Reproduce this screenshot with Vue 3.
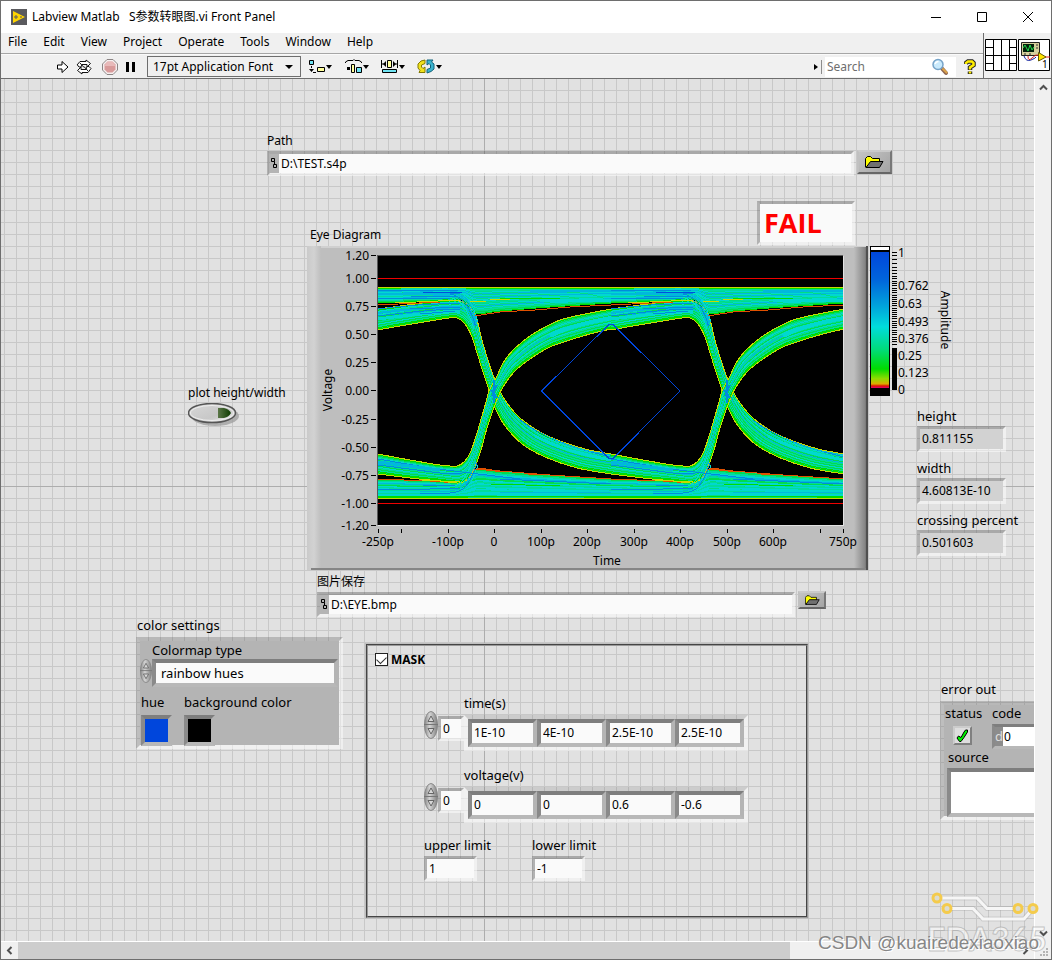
<script setup>
import { ref } from 'vue'

const menus = ['File', 'Edit', 'View', 'Project', 'Operate', 'Tools', 'Window', 'Help']
const path = ref('D:\\TEST.s4p')
const savePath = ref('D:\\EYE.bmp')
const maskOn = ref(true)

const readouts = [
  { id: 'height', label: 'height', value: '0.811155' },
  { id: 'width', label: 'width', value: '4.60813E-10' },
  { id: 'crossing', label: 'crossing percent', value: '0.501603' },
]
const arrays = [
  { id: 'time', label: 'time(s)', cells: ['1E-10', '4E-10', '2.5E-10', '2.5E-10'] },
  { id: 'voltage', label: 'voltage(v)', cells: ['0', '0', '0.6', '-0.6'] },
]
const limits = [
  { id: 'upper', label: 'upper limit', value: '1' },
  { id: 'lower', label: 'lower limit', value: '-1' },
]

/* axes */
const yTicks = ['1.20', '1.00', '0.75', '0.50', '0.25', '0.00', '-0.25', '-0.50', '-0.75', '-1.00', '-1.20']
  .map(t => ({ t, y: Math.round(144.4 - Number(t) * 112.5) }))
const xTicks = [-250, -200, -100, 0, 100, 200, 300, 400, 500, 600, 700, 750]
  .map(v => ({ x: Math.round(187 + v * 0.465), t: v === -200 || v === 700 ? '' : v === 0 ? '0' : v + 'p' }))

/* eye traces: pairs of points on the two edges of each band */
const band = rows => rows.map(r => [[r[0], r[1]], [r[2], r[3]]])
const falling = band([
  [378, 309, 378, 330], [400, 306, 400, 326], [430, 302, 430, 321], [449, 300, 449, 318],
  [463, 302, 457, 318], [471, 308, 465, 324], [477, 320, 472, 337], [482, 340, 477, 353],
  [487, 357, 482, 369], [493, 375, 488, 387], [500, 391, 491, 398], [507, 403, 495, 408],
  [520, 418, 505, 426], [540, 432, 522, 444], [560, 441, 545, 457], [585, 449, 577, 468], [611, 454, 611, 474],
])
const rising = band([
  [378, 454, 378, 474], [410, 460, 410, 478], [440, 465, 440, 481], [457, 466, 459, 483],
  [465, 461, 469, 478], [471, 451, 475, 467], [477, 433, 481, 450], [482, 416, 487, 428],
  [486, 402, 492, 413], [489, 391, 498, 397], [496, 378, 503, 387], [507, 357, 515, 371],
  [527, 338, 533, 357], [547, 326, 550, 347], [563, 319, 567, 341], [590, 313, 590, 334], [611, 309, 611, 329],
])
const topRail = band([[378, 287, 378, 303], [430, 287, 430, 301], [462, 287, 462, 300], [476, 287, 476, 313], [500, 287, 500, 311], [550, 287, 550, 307], [611, 287, 611, 303]])
const lowRail = band([[378, 479, 378, 498], [430, 481, 430, 498], [462, 482, 462, 498], [476, 469, 476, 498], [500, 471, 500, 498], [550, 475, 550, 498], [611, 479, 611, 498]])
const topBend = band([[420, 290, 420, 300], [448, 289, 448, 299], [460, 292, 456, 302], [468, 299, 463, 308], [474, 310, 469, 319], [478, 322, 473, 330]])
const lowBend = band([[420, 488, 420, 495], [450, 487, 450, 495], [461, 482, 464, 491], [468, 471, 472, 480], [474, 457, 478, 465]])

function smooth(p) {
  let d = `M${p[0][0]} ${p[0][1]}`
  for (let i = 0; i < p.length - 1; i++) {
    const a = p[i - 1] || p[i], b = p[i], c = p[i + 1], e = p[i + 2] || c
    const f = n => n.toFixed(1)
    d += `C${f(b[0] + (c[0] - a[0]) / 6)} ${f(b[1] + (c[1] - a[1]) / 6)} ${f(c[0] - (e[0] - b[0]) / 6)} ${f(c[1] - (e[1] - b[1]) / 6)} ${f(c[0])} ${f(c[1])}`
  }
  return d
}
const T = '#00dc84'
function body(pairs) {
  const upper = smooth(pairs.map(p => p[0]))
  const lower = smooth(pairs.map(p => p[1]).reverse())
  return { d: upper + 'L' + lower.slice(1) + 'Z', c: 'none', w: 0, fill: T }
}
function strands(pairs, colors, w = 1) {
  const n = colors.length
  const order = [...colors.keys()].slice(1, -1).concat([0, n - 1])
  return order.map(i => {
    const t = i / (n - 1)
    const edge = i === 0 || i === n - 1
    return { d: smooth(pairs.map(([u, l]) => [u[0] + (l[0] - u[0]) * t, u[1] + (l[1] - u[1]) * t])), c: colors[i], w: edge ? 1 : w, fill: 'none' }
  })
}
const R = '#e05000', Y = '#c8d800', G = '#00dc00', g = '#00dc50', t = '#00dc9c', c = '#00d8d0', b = '#00b8dc', B = '#008cdc', D = '#0050dc'
const traces = [
  body(topRail), ...strands(topRail, [Y, G, t, c, b, c, b, c, c, t, c, b, c, t, g, G]),
  body(lowRail), ...strands(lowRail, [R, g, t, c, b, t, g, c, t, c, t, c, c, t, c, c, G, Y], 1.5),
  body(falling), ...strands(falling, [Y, G, c, t, g, c, t, g, b, t, g, t, g, c, g, t, G, G, Y]),
  body(rising), ...strands(rising, [Y, G, g, t, c, t, g, c, t, b, t, g, c, t, g, t, G, G, Y]),
  ...strands(topBend, [c, b, b, B, b, c, t], 1),
  ...strands(lowBend, [c, t, b, B, c], 1),
]
const streaks = [
  { d: 'M378 309C410 305 435 303 460 304', c: B }, { d: 'M378 313C410 309 435 307 462 307', c: b, w: 2 }, { d: 'M378 319C410 315 435 312 460 311', c: c, w: 3 }, { d: 'M378 316C410 312 435 309 460 309', c: B },
  { d: 'M378 290H458', c: B }, { d: 'M411 293H460', c: B }, { d: 'M378 298H450', c: B }, { d: 'M423 292H462', c: D }, { d: 'M378 294H450', c: b, w: 2 },
  { d: 'M411 296H456', c: B }, { d: 'M500 298H560', c: G }, { d: 'M530 291H611', c: b, w: 2 }, { d: 'M480 289H530', c: t }, { d: 'M540 300H611', c: c, w: 3 },
  { d: 'M378 489H430L460 488', c: B }, { d: 'M423 485H455', c: B }, { d: 'M490 484L560 486', c: G }, { d: 'M500 479L611 484', c: B },
  { d: 'M378 459L430 468L470 473L520 479', c: B }, { d: 'M378 465L440 473H462', c: B }, { d: 'M378 462L440 470', c: b, w: 3 }, { d: 'M500 492H611', c: b },
  { d: 'M410 309L460 307', c: B }, { d: 'M420 314L455 311', c: B }, { d: 'M378 305L440 302', c: R }, { d: 'M395 303L460 300', c: Y },
  { d: 'M470 301H486M490 299H510', c: Y }, { d: 'M475 316L500 312L535 310L570 307L611 305', c: R },
  { d: 'M378 479H402M414 480H422', c: R }, { d: 'M422 480L460 482', c: Y }, { d: 'M476 469L505 472M528 474H547', c: R },
  { d: 'M520 420C540 436 575 449 611 457', c: B }, { d: 'M535 436C560 449 580 454 611 460', c: c, w: 3 }, { d: 'M545 435C565 446 585 451 611 455', c: b },
  { d: 'M550 336C570 326 590 322 611 318', c: c, w: 4 },
]

/* colour ramp scale */
const rampLabels = [['1', 253], ['0.762', 286], ['0.63', 304], ['0.493', 322], ['0.376', 339], ['0.25', 356], ['0.123', 373], ['0', 390]]
const rampTicks = [253, 256, 260, 264, 268, 271, 274, 277, 279, 282, 284, 286, 289, 291, 293, 296, 298, 300, 302, 304, 306, 309, 311, 313, 315, 317, 319, 322, 324, 326, 328, 331, 333, 335, 338, 340, 342, 345]
</script>

<template>
  <div class="window">
    <header class="titlebar">
      <svg class="appicon" width="16" height="16" viewBox="0 0 16 16"><path fill="#5a5a5e" d="M0 0H16V16H0z" /><path fill="#ffd500" d="M2 2L14 8L2 14z" /><path stroke="#5a5a5e" d="M3 8h4M5 6v4M9 8h2" /></svg>
      <h1>Labview Matlab&nbsp;&nbsp; S参数转眼图.vi Front Panel</h1>
      <div class="winbtns">
        <button aria-label="Minimize"><svg width="12" height="12"><path d="M1 6.500H11" /></svg></button>
        <button aria-label="Maximize"><svg width="12" height="12"><path d="M1.500 1.500H10.500V10.500H1.500z" /></svg></button>
        <button aria-label="Close"><svg width="12" height="12"><path d="M1 1L11 11M11 1L1 11" /></svg></button>
      </div>
    </header>

    <div class="bars">
      <div class="barcol">
        <nav class="menubar"><button v-for="m in menus" :key="m">{{ m }}</button></nav>
        <div class="toolbar">
          <button class="run" aria-label="Run"><svg width="14" height="14" viewBox="0 0 14 14"><path fill="#fff" stroke="#000" d="M1.500 5H6V1.500L12 7L6 12.500V9H1.500z" /></svg></button>
          <button class="cont" aria-label="Run continuously"><svg width="16" height="16" viewBox="0 0 16 16" fill="#fff" stroke="#111"><path d="M1 6L4 2.500H10V1L14.500 4.500L11 8V5.500H6L5 8H3L1.500 6z" /><path d="M15 9.500L12 13.500H6V15L1.500 11.500L5 8V10.500H10L11 7.500H13L15 9.500z" /><path d="M4 4L8 8.500M8 7.500L12 12" /></svg></button>
          <button class="stop" aria-label="Abort"><svg width="16" height="16" viewBox="0 0 16 16"><path fill="#f5eeee" stroke="#8c8585" d="M5 .5H11L15.500 5V11L11 15.500H5L.5 11V5z" /><path fill="#d99a9a" d="M5.500 2.500H10.500L13.500 5.500V10.500L10.500 13.500H5.500L2.500 10.500V5.500z" /><path fill="#e8b9b9" d="M5.500 3H10.500L13 5.500V7H3V5.500z" /></svg></button>
          <button class="pause" aria-label="Pause"><svg width="9" height="12"><path d="M0 1H3V11H0zM6 1H9V11H6z" /></svg></button>
          <span class="fontpick"><select aria-label="Font"><option>17pt Application Font</option></select><i class="caret"></i></span>
          <button class="tool" aria-label="Align objects"><svg width="16" height="15" viewBox="0 0 16 15"><path fill="#6fe3f2" stroke="#000" d="M.5 1.500h4v4h-4z" /><path fill="#ffff9c" stroke="#000" d="M8.500 8.500h7v4h-7z" /><path d="M2 7h1v2H2zM2 10h1v2H2zM0 10h5l-2.500 3zM4 13h3v1H4z" /></svg><i class="caret"></i></button>
          <button class="tool" aria-label="Distribute objects"><svg width="17" height="15" viewBox="0 0 17 15"><path fill="none" stroke="#000" d="M.5 4V3L3 1.500H8L9 .5L10 1.500H14L16.500 3V4" /><path fill="#ffff9c" stroke="#000" d="M6.500 5.500h3v8h-3z" /><path fill="#6fe3f2" stroke="#000" d="M11.500 8.500h5v5h-5z" /><path d="M2 8h3v3H2z" /></svg><i class="caret"></i></button>
          <button class="tool" aria-label="Resize objects"><svg width="17" height="15" viewBox="0 0 17 15"><path stroke="#000" d="M.5 1V9M16.500 1V9M1 5H5M12 5H16" /><path d="M2 5L5 2V8zM15 5L12 2V8z" /><path fill="#ffff9c" stroke="#000" d="M6.500 1.500h4v7h-4z" /><path fill="#6fe3f2" stroke="#000" d="M1.500 10.500h14v3h-14z" /></svg><i class="caret"></i></button>
          <button class="tool" aria-label="Reorder"><svg width="18" height="15" viewBox="0 0 18 15"><path fill="#f1e21b" stroke="#847a00" d="M8 1L4 2L1 5V9L3 11.500L2 13.500H8V8L6 9.500L4.500 8V6L8 4.500z" /><path fill="#3bb4cf" stroke="#11627a" d="M10 1V6L12 4.500L13.500 6V9L10 10.500V14L14 12.500L17 10V5L14.500 3L16 1z" /></svg><i class="caret"></i></button>
          <div class="search">
            <i class="tri"></i><i class="bar"></i>
            <label class="searchbox"><input type="search" placeholder="Search" aria-label="Search"><svg width="18" height="18" viewBox="0 0 18 18"><path stroke="#8f6752" stroke-width="4" stroke-linecap="round" d="M11 10.500L15 15" /><path stroke="#dca34a" stroke-width="2" stroke-linecap="round" d="M12 11L15.500 14.500" /><circle cx="7" cy="6.500" r="5" fill="#c9eafc" stroke="#76a3c8" stroke-width="1.500" /><path stroke="#fff" stroke-width="1.500" fill="none" d="M4 6Q5 3.500 7.500 3.500" /></svg></label>
            <button class="help" aria-label="Context help"><svg width="12" height="16" viewBox="0 0 12 16"><path fill="none" stroke="#222" stroke-width="4.500" d="M2 5V4L4 2.500H8L9.500 4V6L6 8.500V11M6 12.500V15" /><path fill="none" stroke="#ffee00" stroke-width="2.500" d="M2 5V4L4 2.500H8L9.500 4V6L6 8.500V10.500M6 12.500V14.500" /></svg></button>
          </div>
        </div>
      </div>
      <div class="viicon">
        <svg width="32" height="32" viewBox="0 0 32 32"><path fill="#fff" stroke="#000" d="M.5.500h31v31h-31z" /><path stroke="#000" d="M8.500 0V32M16.500 0V32M24.500 0V32M0 16.500H32M0 8.500H8M24 8.500H32M0 24.500H8M24 24.500H32" /></svg>
        <svg width="32" height="32" viewBox="0 0 32 32"><path fill="#fff" stroke="#000" d="M.5.500h31v31h-31z" /><path fill="#d5cf9c" stroke="#222" d="M3.500 3.500h18v13h-18z" /><path fill="#04210b" d="M5 5h11v8H5z" /><path fill="none" stroke="#1fd84b" d="M5 9L7 6L10 12L12 6L14 11L16 8" /><path stroke="#333" d="M18 6h2M18 9h2M6 15h2M11 15h2" /><path fill="none" stroke="#1424a0" d="M6 17Q8 23 13 21T18 18" /><path fill="none" stroke="#d22" d="M10 17Q10 23 14 19T20 16M27 18H32" /><path fill="#ffe500" stroke="#665b00" d="M20.500 13.500L28 18L20.500 22z" /><text class="vinum" x="24" y="29">1</text></svg>
      </div>
    </div>

    <main class="work">
      <div class="panel">
        <div class="obj o-path">
          <label for="path">Path</label>
          <div class="row">
            <span class="inset pathctl"><svg width="9" height="19"><path fill="none" stroke="#000" d="M1.500 4.500h3v3h-3zM3.500 10.500h3v3h-3zM4.500 7.500V10" /></svg><input id="path" v-model="path"></span>
            <button class="browse" aria-label="Browse path"><svg width="19" height="13" viewBox="0 0 19 13"><path fill="#ffff00" stroke="#000" d="M.5 11V2.500L2.500.5H5.500L7.500 2.500H14.500V6H6L2 11.500z" /><path fill="#707070" stroke="#000" d="M1 11.500L5.500 5.500H18L14.500 11.500z" /></svg></button>
          </div>
        </div>

        <output class="obj o-fail inset">FAIL</output>

        <section class="obj o-eye">
          <h2>Eye Diagram</h2>
          <svg class="graph" width="561" height="324" viewBox="0 0 561 324">
            <defs>
              <linearGradient id="lg" x1="0" x2="1"><stop offset="0" stop-color="#cacaca" /><stop offset=".5" stop-color="#d2d2d2" /><stop offset="1" stop-color="#bebebe" /></linearGradient>
              <linearGradient id="rg" x1="0" x2="1"><stop offset="0" stop-color="#bebebe" /><stop offset=".75" stop-color="#888" /><stop offset="1" stop-color="#606060" /></linearGradient>
              <clipPath id="clip"><path d="M71 10H536V279H71z" /></clipPath>
            </defs>
            <path fill="#bebebe" d="M0 0H561V324H0z" />
            <path fill="#d0d0d0" d="M0 0H561V2H0z" />
            <path fill="url(#lg)" d="M0 0H14V324H0z" />
            <path fill="url(#rg)" d="M547 1H561V324H547z" />
            <path fill="#858585" d="M4 322H561V324H4z" />
            <path fill="#505050" d="M559 0H561V324H559z" />
            <path fill="#5a5a5a" d="M70 9H536V279H70z" />
            <path fill="#e2e2e2" d="M71 279H536V10H537V280H71z" />
            <path fill="#000" d="M71 10H536V279H71z" />
            <g clip-path="url(#clip)" fill="none" shape-rendering="crispEdges">
              <path stroke="#f00000" d="M71 32.500H537M71 257.500H537" />
              <g v-for="k in 2" :key="k" :transform="`translate(${-307 + (k - 1) * 233} -246)`">
                <path v-for="(s, i) in traces" :key="i" :d="s.d" :stroke="s.c" :stroke-width="s.w" :fill="s.fill" />
                <path v-for="(s, i) in streaks" :key="'s' + i" :d="s.d" :stroke="s.c" :stroke-width="s.w || 1" />
                <path stroke="#008cdc" stroke-width="2" d="M494 380V403M491 390L497 398M497 385L492 396" />
              </g>
              <path stroke="#0046dc" d="M234.500 145L302 78.500H306L373 145L306 212.500H302z" />
            </g>
            <g v-for="k in yTicks" :key="k.t"><path stroke="#000" :d="`M64 ${k.y + .5}H69`" /><text class="yl" x="62" :y="k.y + 5">{{ k.t }}</text></g>
            <g v-for="k in xTicks" :key="k.x"><path stroke="#000" :d="`M${k.x + .5} 283V287`" /><text class="xl" :x="k.x" y="300">{{ k.t }}</text></g>
            <text class="xl" x="300" y="319">Time</text>
            <text class="xl" transform="translate(25 144) rotate(-90)">Voltage</text>
          </svg>
        </section>

        <svg class="obj o-ramp" width="90" height="158" viewBox="0 -4 90 158">
          <defs><linearGradient id="ramp" x2="0" y2="1"><stop offset="0" stop-color="#0046dc" /><stop offset=".2" stop-color="#0064dc" /><stop offset=".4" stop-color="#00a4dc" /><stop offset=".55" stop-color="#00dcdc" /><stop offset=".72" stop-color="#00dc78" /><stop offset=".86" stop-color="#00dc00" /><stop offset=".93" stop-color="#8cdc00" /><stop offset=".97" stop-color="#dcaa00" /><stop offset=".985" stop-color="#dc1400" /><stop offset="1" stop-color="#dc0078" /></linearGradient></defs>
          <path d="M0 0H20V150H0z" /><path fill="#fff" d="M1 1H19V4H1z" /><path fill="url(#ramp)" d="M1 6H19V142H1z" />
          <path v-for="y in rampTicks" :key="y" stroke="#000" :d="`M22 ${y - 246.5}H27`" />
          <path d="M22 102H27V144H22z" />
          <text v-for="l in rampLabels" :key="l[0]" x="28" :y="l[1] - 242">{{ l[0] }}</text>
          <text class="xl" transform="translate(71 74) rotate(90)">Amplitude</text>
        </svg>

        <div class="obj o-plot">
          <label for="plot">plot height/width</label>
          <button id="plot" class="pill"><svg width="52" height="25" viewBox="0 0 52 25"><defs><linearGradient id="pl" x1="0" y1="0" x2="1" y2="1"><stop offset="0" stop-color="#d8d8d8" /><stop offset=".6" stop-color="#c8c8c8" /><stop offset="1" stop-color="#eee" /></linearGradient><linearGradient id="gr" x1="0" x2="1"><stop offset="0" stop-color="#5b7748" /><stop offset="1" stop-color="#0d3b00" /></linearGradient></defs><ellipse cx="27" cy="13" rx="24" ry="10" fill="#999" opacity=".7" /><ellipse cx="24" cy="10" rx="23.500" ry="9.500" fill="url(#pl)" stroke="#555" stroke-width="1.500" /><ellipse cx="24" cy="10" rx="21.500" ry="7.500" fill="none" stroke="#eee" /><path fill="url(#gr)" d="M30 5H36Q41 6 43 10Q41 14 36 15H30z" /></svg></button>
        </div>

        <div class="obj o-read">
          <div v-for="r in readouts" :key="r.id"><label :for="r.id">{{ r.label }}</label><output :id="r.id" class="inset">{{ r.value }}</output></div>
        </div>

        <div class="obj o-save">
          <label for="save">图片保存</label>
          <div class="row">
            <span class="inset pathctl"><svg width="9" height="19"><path fill="none" stroke="#000" d="M1.500 4.500h3v3h-3zM3.500 10.500h3v3h-3zM4.500 7.500V10" /></svg><input id="save" v-model="savePath"></span>
            <button class="browse small" aria-label="Browse save path"><svg width="15" height="11" viewBox="0 0 19 13"><path fill="#ffff00" stroke="#000" d="M.5 11V2.500L2.500.5H5.500L7.500 2.500H14.500V6H6L2 11.500z" /><path fill="#707070" stroke="#000" d="M1 11.500L5.500 5.500H18L14.500 11.500z" /></svg></button>
          </div>
        </div>

        <section class="obj o-color">
          <h2>color settings</h2>
          <div class="cluster">
            <label for="cmap" class="cmlabel">Colormap type</label>
            <div class="row cmrow">
              <button class="spin" aria-label="Next colormap"><svg width="12" height="24" viewBox="0 0 14 28"><ellipse cx="7" cy="14" rx="6.500" ry="13.500" fill="url(#sptime)" stroke="#888" /><path fill="#d8d8d8" stroke="#666" d="M4 10.500L7 5L10 10.500zM4 17.500L7 23L10 17.500z" /><path stroke="#777" d="M0 13.500H14" /></svg></button>
              <span class="inset dark combo"><select id="cmap"><option>rainbow hues</option></select></span>
            </div>
            <div class="row swrow">
              <div><label for="hue">hue</label><button id="hue" class="inset dark swatch blue"></button></div>
              <div><label for="bg">background color</label><button id="bg" class="inset dark swatch black"></button></div>
            </div>
          </div>
        </section>

        <section class="obj o-mask">
          <label class="check"><input v-model="maskOn" type="checkbox"><span>MASK</span></label>
          <div v-for="a in arrays" :key="a.id" class="array">
            <button class="spin" :aria-label="a.label + ' index step'"><svg width="14" height="28" viewBox="0 0 14 28"><defs><linearGradient :id="'sp' + a.id" x2="1"><stop offset="0" stop-color="#888" /><stop offset=".4" stop-color="#d4d4d4" /><stop offset="1" stop-color="#808080" /></linearGradient></defs><ellipse cx="7" cy="14" rx="6.500" ry="13.500" :fill="`url(#sp${a.id})`" stroke="#888" /><path fill="#d8d8d8" stroke="#666" d="M4 10.500L7 5L10 10.500zM4 17.500L7 23L10 17.500z" /><path stroke="#777" d="M0 13.500H14" /></svg></button>
            <span class="inset idx"><input value="0" :aria-label="a.label + ' index'"></span>
            <div>
              <label :for="a.id">{{ a.label }}</label>
              <div class="frame"><span v-for="(v, i) in a.cells" :key="i" class="inset dark"><input :id="i ? a.id + i : a.id" :value="v" :aria-label="a.label + ' ' + i"></span></div>
            </div>
          </div>
          <div class="row limits">
            <div v-for="l in limits" :key="l.id"><label :for="l.id">{{ l.label }}</label><span class="inset"><input :id="l.id" :value="l.value"></span></div>
          </div>
        </section>

        <section class="obj o-err">
          <h2>error out</h2>
          <div class="cluster">
            <div class="row">
              <div class="status"><label for="st">status</label><button id="st"><svg width="13" height="14" viewBox="0 0 13 14"><path fill="#00f000" stroke="#000" d="M1 9L2.500 7L5 8.500L8 3L9.500 1H11.500V3L8 8.500L5 12.500H3.500z" /></svg></button></div>
              <div class="code"><label for="code">code</label><span class="inset dark"><b>d</b><input id="code" value="0"></span></div>
            </div>
            <label for="src" class="srclabel">source</label>
            <span class="inset dark src"><textarea id="src"></textarea></span>
          </div>
        </section>
      </div>

      <div class="vscroll"><button aria-label="Scroll up"><svg width="9" height="7"><path d="M1 5.500L4.500 2L8 5.500" /></svg></button><button aria-label="Scroll down"><svg width="9" height="7"><path d="M1 1.500L4.500 5L8 1.500" /></svg></button></div>
      <div class="hscroll"><button aria-label="Scroll left"><svg width="7" height="9"><path d="M5.500 1L2 4.500L5.500 8" /></svg></button><i class="thumb"></i><i class="track"></i><button aria-label="Scroll right"><svg width="7" height="9"><path d="M1.500 1L5 4.500L1.500 8" /></svg></button></div>
      <div class="grip"><svg width="9" height="9"><path fill="#b4b4b4" d="M6 0h2v2H6zM3 3h2v2H3zM6 3h2v2H6zM0 6h2v2H0zM3 6h2v2H3zM6 6h2v2H6z" /></svg></div>
    </main>

    <div class="mark">
      <svg width="124" height="68" viewBox="0 0 124 68"><g fill="none" stroke="#999" stroke-opacity=".3" stroke-width="5"><path d="M12 7H50L60 17.500H88M22 17.500H46L56 28H97L106 17.500" /></g><g fill="none" stroke="#f6f6f6" stroke-width="3"><path d="M12 7H50L60 17.500H88M22 17.500H46L56 28H97L106 17.500" /></g><g fill="#dcdcd0" stroke="#f4cb4c" stroke-width="3"><circle cx="10" cy="7" r="4" /><circle cx="20" cy="17.500" r="4" /><circle cx="91" cy="17.500" r="4" /><circle cx="106" cy="17.500" r="4" /></g><text x="0" y="60">EDA365</text></svg>
    </div>
    <p class="credit">CSDN @kuairedexiaoxiao</p>
  </div>
</template>

<style>
body { margin: 0; }
</style>

<style scoped>
* { box-sizing: border-box; }
.window { position: relative; height: 100vh; display: flex; flex-direction: column; border: 1px solid #6e6e6e; background: #f0f0f0; color: #000; font: 13px/18px "Noto Sans", "Noto Sans CJK SC", sans-serif; overflow: hidden; }
button, input, select, textarea { font: inherit; color: inherit; border: 0; margin: 0; padding: 0; background: none; border-radius: 0; outline: 0; }
button { display: flex; align-items: center; justify-content: center; }
svg { display: block; flex: none; }
h1, h2 { margin: 0; font: inherit; white-space: nowrap; }
label { white-space: nowrap; }
text { font: 12px "Noto Sans", sans-serif; }
.vinum { font-size: 10px; }
select { appearance: none; }
.row { display: flex; }

.titlebar { display: flex; align-items: center; height: 32px; background: #fff; padding-left: 10px; }
.titlebar h1 { margin-left: 5px; font-size: 12px; flex: 1; }
.winbtns { display: flex; }
.winbtns button { width: 46px; height: 30px; }
.winbtns svg { fill: none; stroke: #000; }

.bars { display: flex; height: 46px; border-bottom: 1px solid #6e6e6e; }
.barcol { flex: 1; display: flex; flex-direction: column; min-width: 0; }
.menubar { display: flex; height: 21px; gap: 16px; padding: 0 0 2px 7px; border-bottom: 1px solid #a6a6a6; font-size: 12px; }
.toolbar { flex: 1; display: flex; align-items: center; padding-left: 55px; border-top: 1px solid #fafafa; }
.cont { margin-left: 6px; }
.stop { margin-left: 10px; }
.pause { margin-left: 8px; }
.fontpick { position: relative; margin-left: 12px; width: 154px; height: 21px; border: 1px solid #6e6e6e; }
.fontpick select { width: 100%; height: 19px; padding-left: 5px; font-size: 12px; }
.caret { width: 0; height: 0; border: 4px solid transparent; border-top-color: #000; border-bottom: 0; }
.fontpick .caret { position: absolute; right: 7px; top: 8px; }
.tool { margin-left: 8px; height: 20px; width: 28px; justify-content: flex-start; }
.tool .caret { border-left-width: 3px; border-right-width: 3px; margin-left: 1px; }
.search { margin-left: auto; display: flex; align-items: center; padding-right: 7px; }
.tri { border: 3px solid transparent; border-left: 4px solid #000; border-right: 0; }
.bar { width: 1px; height: 14px; background: #8c8c8c; margin: 0 3px; }
.searchbox { display: flex; align-items: center; width: 131px; height: 20px; background: #fff; padding: 0 7px 0 2px; }
.searchbox input { flex: 1; min-width: 0; font-size: 12px; }
.searchbox input::placeholder { color: #6e6e6e; opacity: 1; }
.help { margin-left: 8px; }
.viicon { width: 68px; border-left: 1px solid #6e6e6e; display: flex; align-items: center; gap: 1px; padding: 0 1px 2px; }

.work { flex: 1; min-height: 0; display: grid; grid-template: minmax(0, 1fr) 18px / minmax(0, 1fr) 17px; }
.panel { position: relative; overflow: hidden; background-color: #e1e1e1;
  background-image: linear-gradient(#adadad, #adadad), linear-gradient(#adadad, #adadad), linear-gradient(90deg, #c8c8c8 1px, transparent 1px), linear-gradient(#c8c8c8 1px, transparent 1px);
  background-size: 1px 100%, 100% 1px, 12px 12px, 12px 12px; background-position: 483px 0, 0 407px, 3px 11px, 3px 11px; background-repeat: no-repeat, no-repeat, repeat, repeat; }
.obj { position: absolute; }
.obj label, .obj h2 { display: block; line-height: 16px; padding-bottom: 2px; }
.inset { display: flex; border: 3px solid; border-color: rgba(80,80,80,.38) rgba(255,255,255,.5) rgba(255,255,255,.5) rgba(80,80,80,.32); background: #fafafa padding-box; }
.inset.dark { border-width: 4px; border-color: #7e7e7e #b4b4b4 #b8b8b8 #8a8a8a; }
.inset input { width: 100%; min-width: 0; height: 19px; font-size: 12px; padding-left: 2px; }

.o-path { left: 266px; top: 53px; }
.o-path .pathctl { width: 587px; margin-top: 1px; }
.o-save { left: 316px; top: 494px; }
.o-save .pathctl { width: 478px; margin-top: 1px; }
.o-path label, .o-save label, .o-plot label { font-size: 12px; line-height: 18px; padding: 0; }
.pathctl svg { background: #b4b4b4; }
.browse { width: 35px; height: 24px; margin-left: 3px; background: linear-gradient(135deg, #c4c4c4, #a4a4a4); border: 2px solid; border-color: #cacaca #777 #666 #c0c0c0; }
.browse.small { width: 28px; height: 18px; }
.o-fail { left: 756px; top: 122px; width: 98px; height: 44px; align-items: center; padding-left: 4px; color: #f00; font: bold 27px/38px "Open Sans", sans-serif; }
.o-eye { left: 306px; top: 147px; }
.o-eye h2 { padding: 1px 0 3px 3px; font-size: 12px; }
.yl { text-anchor: end; }
.xl { text-anchor: middle; }
.o-ramp { left: 869px; top: 163px; }
.o-plot { left: 187px; top: 305px; }
.pill { margin-top: 1px; }
.o-read { left: 916px; top: 329px; display: flex; flex-direction: column; gap: 8px; }
.o-read output { width: 89px; height: 26px; line-height: 20px; padding-left: 2px; background-color: #d2d2d2; font-size: 12px; }
.o-color { left: 135px; top: 538px; }
.o-color h2, .o-err h2 { padding-left: 1px; }
.cluster { background: #b4b4b4 padding-box; border: 4px solid; border-color: rgba(90,90,90,.3) rgba(255,255,255,.45) rgba(255,255,255,.5) rgba(90,90,90,.25); }
.o-color .cluster { width: 207px; height: 112px; margin-top: 2px; }
.cluster .cmlabel { padding: 1px 0 1px 12px; }
.cmrow { align-items: flex-start; }
.combo { flex: 1; height: 28px; margin-right: 1px; }
.combo select { width: 100%; padding-left: 5px; }
.swrow { gap: 22px; padding: 7px 1px 0; }
.swrow > div { width: 21px; }
.swatch { width: 31px; height: 31px; margin-top: 3px; }
.blue { background-color: #0046dc; }
.black { background-color: #000; }
.o-mask { left: 365px; top: 565px; width: 442px; height: 274px; border: 2px groove #999; outline: 1px solid #c0c0c0; }
.o-mask .check { display: flex; align-items: center; gap: 3px; height: 20px; margin: 4px 0 0 7px; padding: 0; font-weight: bold; font-size: 12px; }
.check input { appearance: none; width: 13px; height: 13px; margin-bottom: 1px; border: 1px solid #222; background: #fff; display: grid; place-items: center; }
.check input:checked::after { content: ""; width: 8px; height: 5px; border: solid #333; border-width: 0 0 1px 1px; transform: translateY(-1px) rotate(-45deg); }
.array { display: flex; align-items: flex-start; margin: 25px 0 0 56px; height: 47px; }
.array .spin { margin-top: 16px; }
.idx { width: 26px; height: 25px; margin-top: 21px; }
.frame { display: flex; height: 36px; background: #aaa padding-box; border: 4px solid; border-color: rgba(90,90,90,.15) rgba(255,255,255,.55) rgba(255,255,255,.55); margin-top: 2px; }
.frame .inset { width: 69px; height: 28px; }
.limits { margin: 23px 0 0 56px; }
.limits > div { width: 108px; }
.limits .inset { width: 53px; margin-top: 1px; }
.o-err { left: 939px; top: 602px; width: 260px; }
.o-err .cluster { height: 119px; margin-top: 2px; }
.status { width: 48px; padding-left: 1px; }
.status button { width: 19px; height: 19px; margin: 3px 0 0 8px; border: 2px solid; border-color: #ccc #808080 #808080 #ccc; background: #dedede; }
.code { flex: 1; }
.code .inset { margin-top: 1px; background-color: #fff; border-width: 3px; }
.code b { width: 8px; background: #8c8c8c; color: #ddd; font-weight: normal; }
.code .inset input { padding-left: 1px; }
.srclabel { margin: 0 0 1px 4px; }
.src { margin-left: 3px; height: 49px; background-color: #fff; }
.src textarea { width: 100%; resize: none; }

.vscroll { grid-row: 1 / 3; grid-column: 2; display: flex; flex-direction: column; justify-content: space-between; border-left: 1px solid #fff; padding-bottom: 17px; }
.vscroll button, .hscroll button { width: 17px; height: 17px; }
.vscroll svg, .hscroll svg { fill: none; stroke: #505050; stroke-width: 2; }
.hscroll { display: flex; border-top: 1px solid #fff; }
.thumb { flex: 17; background: #cdcdcd; }
.track { flex: 5; }
.grip { position: absolute; right: 2px; bottom: 2px; }
.mark { position: absolute; right: 0; bottom: 0; pointer-events: none; }
.mark text { font: bold 32px Lato, sans-serif; fill: rgba(255,255,255,.5); stroke: rgba(150,150,150,.5); }
.credit { position: absolute; right: 12px; bottom: 4px; margin: 0; font: 19px/24px "Liberation Sans", sans-serif; color: rgba(120,120,120,.9); text-shadow: 1px 1px 0 #fff; pointer-events: none; }
</style>
